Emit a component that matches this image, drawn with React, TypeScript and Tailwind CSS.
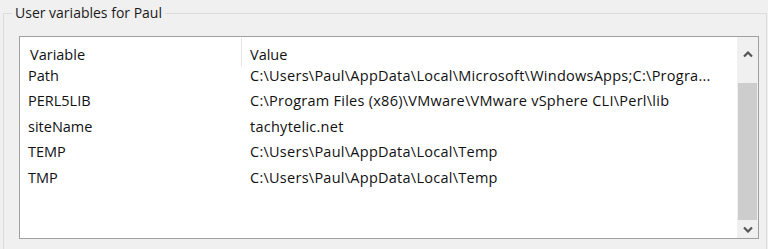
import React from "react";

const rows: [string, string][] = [
  ["Path", "C:\\Users\\Paul\\AppData\\Local\\Microsoft\\WindowsApps;C:\\Progra..."],
  ["PERL5LIB", "C:\\Program Files (x86)\\VMware\\VMware vSphere CLI\\Perl\\lib"],
  ["siteName", "tachytelic.net"],
  ["TEMP", "C:\\Users\\Paul\\AppData\\Local\\Temp"],
  ["TMP", "C:\\Users\\Paul\\AppData\\Local\\Temp"],
];

export default function App() {
  return (
    <div
      className="w-[768px] h-[249px] bg-[#f0f0f0] overflow-hidden text-[14px] text-[#111]"
      style={{ fontFamily: '"Open Sans", "Noto Sans", sans-serif' }}
    >
      <fieldset className="ml-[3px] mr-[1px] mt-[3px] h-[260px] border border-[#dcdcdc] p-0">
        <legend className="ml-[8px] px-[3px] leading-[20px] text-[#1a1a1a]">User variables for Paul</legend>
        <div className="ml-[15px] mr-[7px] mt-[13px] h-[203px] border border-[#a0a0a0] bg-white flex text-[14.5px]">
          <div className="flex-1 flex flex-col">
            <div className="flex h-[26px] items-center">
              <div className="w-[221px] pl-[10px] pt-[9px] h-full flex items-center">Variable</div>
              <div className="w-px h-[28px] bg-[#e5e5e5] self-start mt-[1px]" />
              <div className="pl-[8px] pt-[9px] h-full flex items-center">Value</div>
            </div>
            {rows.map(([k, v]) => (
              <div key={k} className="flex h-[25.5px] items-center">
                <div className="w-[222px] pl-[8px]">{k}</div>
                <div className="pl-[8px] whitespace-nowrap tracking-[0.26px]">{v}</div>
              </div>
            ))}
          </div>
          <div className="w-[21px] bg-[#f0f0f0] flex flex-col">
            <div className="h-[30px] pt-[4px] flex items-center justify-center">
              <svg width="10" height="7" viewBox="0 0 10 7">
                <path d="M1 5.5 L5 1.5 L9 5.5" fill="none" stroke="#555" strokeWidth="2.2" />
              </svg>
            </div>
            <div className="mx-[1px] mt-[16px] h-[137px] bg-[#cdcdcd]" />
            <div className="flex-1 flex items-center justify-center">
              <svg width="10" height="7" viewBox="0 0 10 7">
                <path d="M1 1.5 L5 5.5 L9 1.5" fill="none" stroke="#555" strokeWidth="2.2" />
              </svg>
            </div>
          </div>
        </div>
      </fieldset>
    </div>
  );
}
